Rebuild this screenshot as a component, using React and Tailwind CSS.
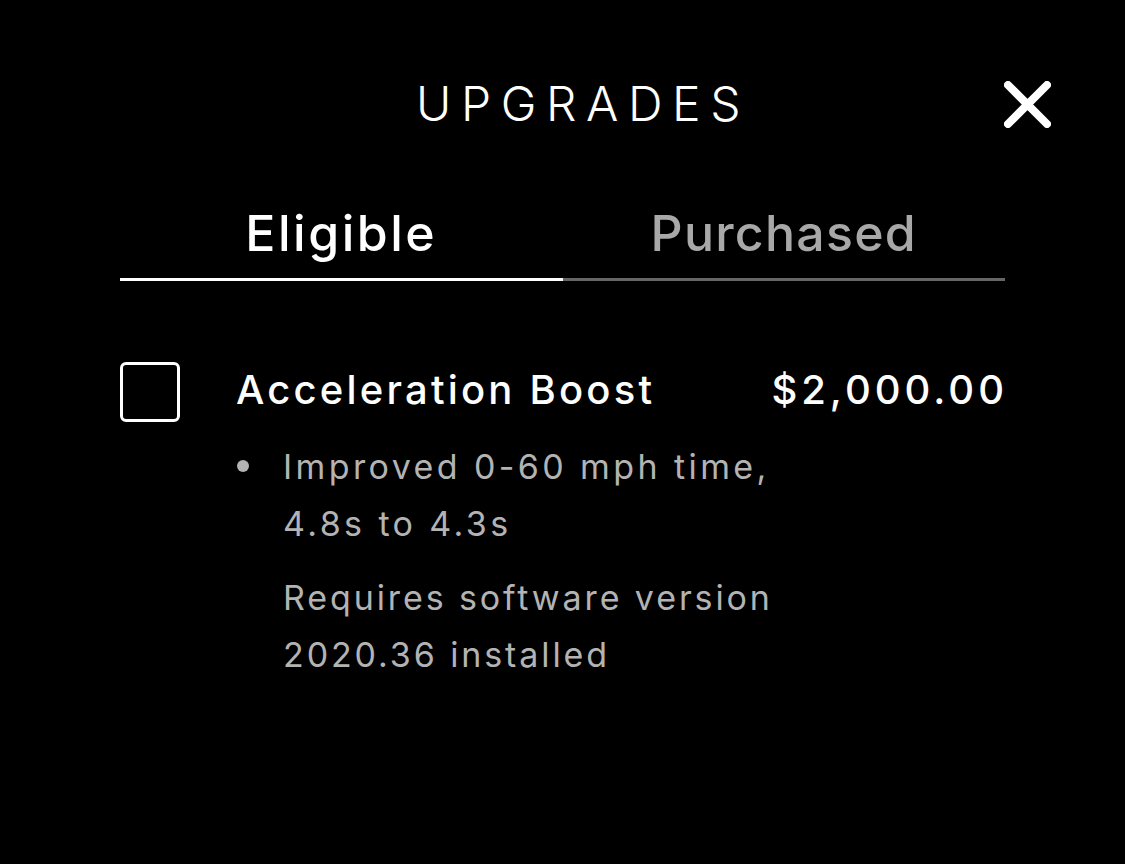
import React from "react";

export default function App() {
  return (
    <div
      className="min-h-[864px] w-full bg-black text-white"
      style={{ fontFamily: "Inter, 'Noto Sans', sans-serif" }}
    >
      <div className="flex items-center justify-between pl-[416px] pr-[74px] pt-[80px]">
        <h1 className="text-[48px] font-light leading-none tracking-[0.2em] text-white">
          UPGRADES
        </h1>
        <button className="flex h-[47px] w-[47px] items-center justify-center">
          <svg width="47" height="47" viewBox="0 0 47 47" fill="none">
            <path
              d="M4 4 L43 43 M43 4 L4 43"
              stroke="white"
              strokeWidth="8"
              strokeLinecap="round"
            />
          </svg>
        </button>
      </div>

      <div className="mx-[120px] mt-[80px] w-[885px]">
        <div className="grid grid-cols-2">
          <div className="flex flex-col items-center">
            <span className="text-[50px] font-medium leading-none tracking-[0.05em] text-white">
              Eligible
            </span>
            <div className="mt-[20px] h-[3px] w-full bg-white" />
          </div>
          <div className="flex flex-col items-center">
            <span className="text-[50px] font-medium leading-none tracking-[0.025em] text-[#a8a8a8]">
              Purchased
            </span>
            <div className="mt-[20px] h-[3px] w-full bg-[#666666]" />
          </div>
        </div>

        <div className="mt-[81px] flex items-start">
          <div className="h-[60px] w-[60px] shrink-0 rounded-[6px] border-[3px] border-white" />
          <div className="ml-[56px] flex-1">
            <div className="flex items-center justify-between pt-[8px]">
              <span className="text-[40px] font-medium leading-none tracking-[0.08em] text-white">
                Acceleration Boost
              </span>
              <span className="mr-[-3px] text-[40px] font-medium leading-none tracking-[0.1em] text-white">
                $2,000.00
              </span>
            </div>
            <div className="mt-[28px] flex items-start text-[34px] leading-[57px] text-[#b3b3b3]">
              <span className="mt-[22px] ml-[1px] h-[12px] w-[12px] shrink-0 rounded-full bg-[#b3b3b3]" />
              <p className="ml-[34px] w-[560px] tracking-[0.1em]">
                Improved 0-60 mph time,
                <br />
                4.8s to 4.3s
              </p>
            </div>
            <p className="mt-[17px] ml-[47px] text-[34px] leading-[57px] tracking-[0.085em] text-[#b3b3b3]">
              Requires software version
              <br />
              2020.36 installed
            </p>
          </div>
        </div>
      </div>
    </div>
  );
}
